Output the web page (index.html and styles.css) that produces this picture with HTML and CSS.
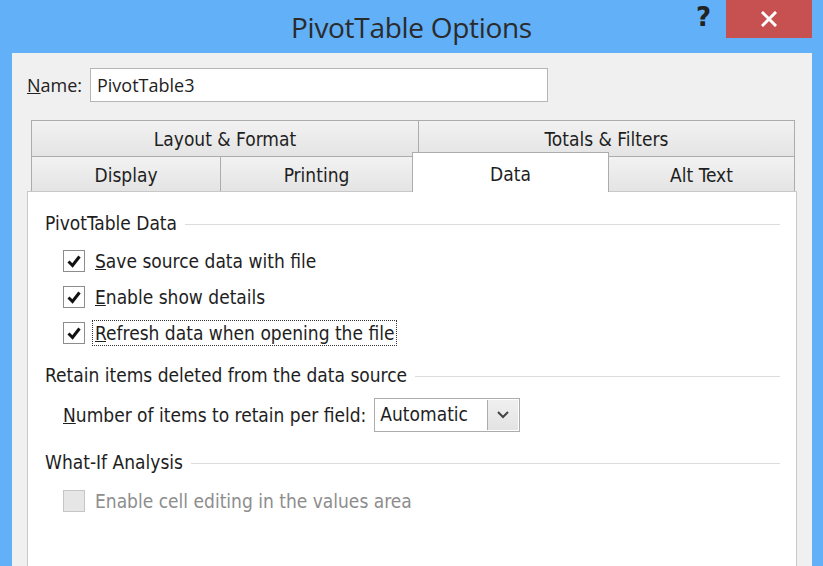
FILE: index.html
```html
<!DOCTYPE html>
<html>
<head>
<meta charset="utf-8">
<link rel="stylesheet" href="styles.css">
</head>
<body>
<div class="window">
  <div class="titlebar">
    <div class="tb-side"></div>
    <div class="title">PivotTable Options</div>
    <div class="tb-side tb-controls">
      <span class="help">?</span>
      <span class="close">
        <svg width="16" height="16" viewBox="0 0 16 16"><path d="M2 2 L14 14 M14 2 L2 14" stroke="#fff" stroke-width="3" stroke-linecap="square"/></svg>
      </span>
    </div>
  </div>
  <div class="body">
    <div class="name-row">
      <label class="name-label"><u>N</u>ame:</label>
      <div class="name-input">PivotTable3</div>
    </div>
    <div class="tabs">
      <div class="tab-row">
        <div class="tab w-layout">Layout &amp; Format</div>
        <div class="tab w-totals">Totals &amp; Filters</div>
      </div>
      <div class="tab-row front">
        <div class="tab w-display">Display</div>
        <div class="tab w-printing">Printing</div>
        <div class="tab w-data active">Data</div>
        <div class="tab w-alt">Alt Text</div>
      </div>
    </div>
    <div class="panel">
      <div class="group-title"><span>PivotTable Data</span></div>
      <div class="check-row">
        <span class="cb checked"><svg width="18" height="18" viewBox="0 0 18 18"><path d="M3.5 9.5 L7.5 13.5 L14.5 4.5" fill="none" stroke="#111" stroke-width="3"/></svg></span>
        <span class="cb-text"><u>S</u>ave source data with file</span>
      </div>
      <div class="check-row">
        <span class="cb checked"><svg width="18" height="18" viewBox="0 0 18 18"><path d="M3.5 9.5 L7.5 13.5 L14.5 4.5" fill="none" stroke="#111" stroke-width="3"/></svg></span>
        <span class="cb-text"><u>E</u>nable show details</span>
      </div>
      <div class="check-row">
        <span class="cb checked"><svg width="18" height="18" viewBox="0 0 18 18"><path d="M3.5 9.5 L7.5 13.5 L14.5 4.5" fill="none" stroke="#111" stroke-width="3"/></svg></span>
        <span class="cb-text focus"><u>R</u>efresh data when opening the file</span>
      </div>
      <div class="group-title g2"><span>Retain items deleted from the data source</span></div>
      <div class="select-row">
        <span class="select-label"><u>N</u>umber of items to retain per field:</span>
        <div class="select">
          <span class="select-value">Automatic</span>
          <span class="select-btn"><svg width="14" height="10" viewBox="0 0 14 10"><path d="M2 2 L7 7 L12 2" fill="none" stroke="#444" stroke-width="2"/></svg></span>
        </div>
      </div>
      <div class="group-title g3"><span>What-If Analysis</span></div>
      <div class="check-row disabled">
        <span class="cb"></span>
        <span class="cb-text">Enable cell editing in the values area</span>
      </div>
    </div>
  </div>
</div>
</body>
</html>
```
FILE: styles.css
```css
* { box-sizing: border-box; }
html, body { margin: 0; padding: 0; }
body {
  width: 823px;
  height: 566px;
  overflow: hidden;
  background: #61b0f8;
  font-family: "DejaVu Sans Condensed", "DejaVu Sans", sans-serif;
  color: #1e1e1e;
}
.window {
  height: 566px;
  display: flex;
  flex-direction: column;
}
.titlebar {
  height: 53px;
  display: grid;
  grid-template-columns: 1fr auto 1fr;
  align-items: start;
}
.title {
  font-family: "Open Sans", "Noto Sans", sans-serif;
  font-size: 28px;
  color: #2b2b2b;
  padding-top: 8px;
  letter-spacing: -0.3px;
}
.tb-controls {
  display: flex;
  justify-content: flex-end;
  align-items: flex-start;
  padding-right: 11px;
}
.help {
  font-family: "DejaVu Sans", sans-serif;
  font-weight: bold;
  font-size: 26px;
  color: #222;
  margin-top: 2px;
  margin-right: 15px;
}
.close {
  width: 86px;
  height: 38px;
  background: #c75050;
  display: flex;
  align-items: center;
  justify-content: center;
}
.body {
  flex: 1;
  margin: 0 11px 0 12px;
  background: #f0f0f0;
  padding: 15px 15px 0 15px;
  display: flex;
  flex-direction: column;
  min-height: 0;
}
.name-row {
  display: flex;
  align-items: center;
  height: 34px;
}
.name-label {
  font-family: "Open Sans", sans-serif;
  font-size: 18px;
  color: #222;
  width: 63px;
}
.name-input {
  width: 458px;
  height: 34px;
  border: 1px solid #b5b5b5;
  background: #fff;
  font-family: "Open Sans", sans-serif;
  font-size: 18px;
  padding: 3px 6px;
  line-height: 26px;
}
.tabs {
  margin-top: 18px;
  padding-left: 4px;
}
.tab-row {
  display: flex;
}
.tab {
  border: 1px solid #acacac;
  border-bottom: none;
  background: linear-gradient(#f2f2f2, #e4e4e4);
  font-size: 19px;
  text-align: center;
  height: 36px;
  line-height: 36px;
  margin-right: -1px;
}
.tab-row.front .tab {
  height: 35px;
  line-height: 36px;
}
.tab-row.front .tab.active {
  position: relative;
  z-index: 2;
  background: #fff;
  height: 40px;
  margin-top: -4px;
  margin-bottom: -1px;
  line-height: 42px;
}
.w-layout { width: 388px; }
.w-totals { width: 377px; }
.w-display { width: 190px; }
.w-printing { width: 193px; }
.w-data { width: 197px; }
.w-alt { width: 187px; }
.panel {
  flex: 1;
  width: 770px;
  background: #fff;
  border: 1px solid #c8c8c8;
  border-bottom: none;
  padding: 19px 16px 0 17px;
  position: relative;
  z-index: 1;
}
.group-title {
  display: flex;
  align-items: center;
  font-size: 19px;
  height: 24px;
  color: #1e1e1e;
}
.group-title::after {
  content: "";
  flex: 1;
  height: 1px;
  background: #dcdcdc;
  margin-left: 8px;
  margin-top: 2px;
}
.g2 { margin-top: 12px; }
.g3 { margin-top: 18px; }
.check-row {
  display: flex;
  align-items: center;
  height: 36px;
  padding-left: 18px;
  font-size: 19px;
}
.group-title + .check-row { margin-top: 8px; }
.cb {
  width: 22px;
  height: 22px;
  border: 1px solid #8c8c8c;
  background: #fff;
  display: flex;
  align-items: center;
  justify-content: center;
  margin-right: 10px;
}
.cb-text { padding: 0 2px; line-height: 24px; border: 1px dotted transparent; margin-left: -3px; }
.cb-text.focus { border-color: #333; }
.check-row.disabled { color: #8d8d8d; margin-top: 9px; }
.check-row.disabled .cb { background: #e6e6e6; border-color: #c5c5c5; }
.select-row {
  display: flex;
  align-items: center;
  padding-left: 18px;
  margin-top: 11px;
  font-size: 19px;
}
.select-label { margin-right: 8px; }
.select {
  width: 146px;
  height: 34px;
  border: 1px solid #acacac;
  display: flex;
  background: #fff;
}
.select-value { flex: 1; padding-left: 5px; line-height: 30px; }
.select-btn {
  width: 31px;
  border-left: 1px solid #acacac;
  background: linear-gradient(#f0f0f0, #e3e3e3);
  display: flex;
  align-items: center;
  justify-content: center;
  margin: 1px 1px 1px 0;
}
```
